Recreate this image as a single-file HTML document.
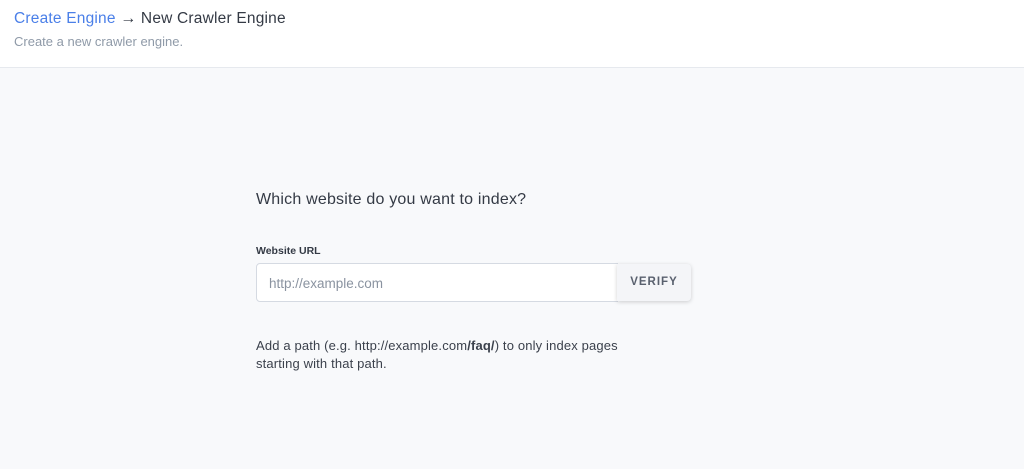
<!DOCTYPE html>
<html><head><meta charset="utf-8"><style>
*{margin:0;padding:0;box-sizing:border-box}
body{width:1024px;height:469px;background:#f8f9fb;font-family:"Liberation Sans",sans-serif;overflow:hidden;position:relative}
.hdr{position:absolute;left:0;top:0;width:1024px;height:68px;background:#fff;border-bottom:1px solid #e6e9ee}
.t1{position:absolute;left:14px;top:10px;font-size:15.5px;color:#343a45;letter-spacing:0.2px}
.t1 a{color:#4a7fe8}
.t1 b{font-weight:bold;font-size:16px}
.t2{position:absolute;left:14px;top:34px;font-size:13px;color:#8f9aa8}
.q{position:absolute;left:256px;top:191px;font-size:16px;color:#343a45;letter-spacing:0.2px}
.lbl{position:absolute;left:256px;top:245px;font-size:10.5px;font-weight:bold;color:#343a45}
.inp{position:absolute;left:256px;top:263px;width:362px;height:39px;background:#fff;border:1px solid #d5dae2;border-radius:4px 0 0 4px;font-size:13.5px;color:#8a93a0;padding:12px 0 0 12px}
.btn{position:absolute;left:617px;top:264px;width:74px;height:37px;background:#f4f5f8;border-radius:0 4px 4px 0;box-shadow:0 1px 4px rgba(0,0,0,.18);font-size:11.5px;font-weight:bold;letter-spacing:1px;color:#59606e;text-align:center;line-height:37px}
.help{position:absolute;left:256px;top:337px;font-size:13px;line-height:18px;color:#3b414c;letter-spacing:0.15px}
</style></head><body>
<div class="hdr"><div class="t1"><a>Create Engine</a> <b>→</b> New Crawler Engine</div><div class="t2">Create a new crawler engine.</div></div>
<div class="q">Which website do you want to index?</div>
<div class="lbl">Website URL</div>
<div class="inp">http://example.com</div>
<div class="btn">VERIFY</div>
<div class="help">Add a path (e.g. http://example.com<b>/faq/</b>) to only index pages<br>starting with that path.</div>
</body></html>
